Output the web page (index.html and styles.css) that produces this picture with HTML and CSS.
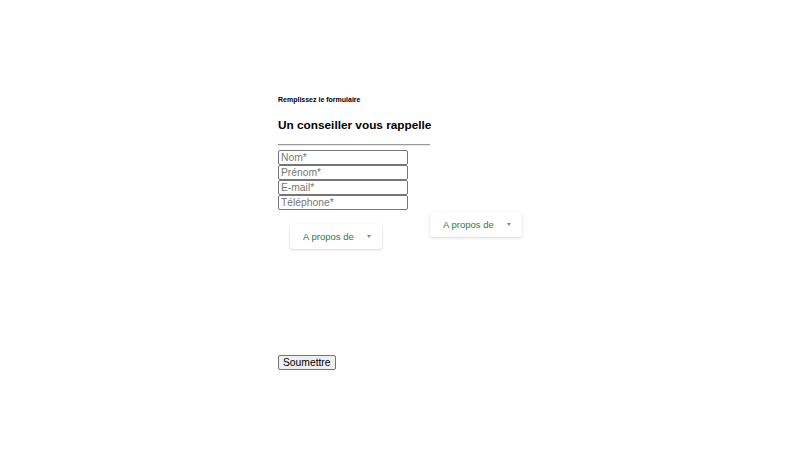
FILE: index.html
```html
<!DOCTYPE html>
<html lang="fr">
<head>
  <meta charset="UTF-8">
  <meta name="viewport" content="width=device-width, initial-scale=1.0">
  <title>Un conseiller vous rappelle</title>
  <link rel="stylesheet" href="styles.css">
</head>
<body>
  <div class="form-wrap">
    <div class="form-head">
      <div class="kicker">Remplissez le formulaire</div>
      <h2 class="title">Un conseiller vous rappelle</h2>
      <hr class="rule">
    </div>
    <form class="callback-form" onsubmit="return false">
      <div class="fields">
        <input class="field" type="text" placeholder="Nom*">
        <input class="field" type="text" placeholder="Prénom*">
        <input class="field" type="email" placeholder="E-mail*">
        <input class="field" type="tel" placeholder="Téléphone*">
      </div>
      <div class="selects">
        <!-- menu déroulant 1 -->
        <div class="dropdown dropdown-low">
          <span class="dropdown-label">A propos de</span>
          <span class="caret"></span>
        </div>
        <!-- menu déroulant 2 -->
        <div class="dropdown dropdown-high">
          <span class="dropdown-label">A propos de</span>
          <span class="caret"></span>
        </div>
      </div>
      <button class="submit" type="submit">Soumettre</button>
    </form>
  </div>
</body>
</html>
```

FILE: styles.css
```css
body {
  margin: 0;
  background: #fff;
  color: #000;
  font-family: "Liberation Sans", Arial, sans-serif;
}
.form-wrap {
  padding: 95px 0 0 278px;
}
.form-head {
  width: 152px;
}
.kicker {
  font-size: 7px;
  font-weight: bold;
  line-height: 9px;
  white-space: nowrap;
}
.title {
  margin: 14px 0 0;
  font-size: 11.8px;
  line-height: 14px;
  white-space: nowrap;
}
.rule {
  margin: 12px 0 4px;
  border: none;
  border-top: 1px solid #9a9a9a;
  border-bottom: 1px solid #e6e6e6;
}
.fields {
  display: flex;
  flex-direction: column;
  width: 130px;
}
.field {
  box-sizing: border-box;
  width: 130px;
  height: 15px;
  margin: 0;
  padding: 0 2px;
  border: 1px solid #767676;
  border-radius: 2px;
  font-family: "Liberation Sans", Arial, sans-serif;
  font-size: 10.3px;
  color: #000;
}
.field::placeholder {
  color: #777;
}
.selects {
  display: flex;
  align-items: flex-start;
  height: 145px;
}
.dropdown {
  box-sizing: border-box;
  width: 92px;
  height: 25px;
  display: flex;
  align-items: center;
  padding: 0 0 0 13px;
  background: #fff;
  box-shadow: 0 1px 3px rgba(0, 0, 0, 0.16);
  border-radius: 2px;
}
.dropdown-low {
  margin: 14px 0 0 12px;
}
.dropdown-high {
  margin: 2px 0 0 48px;
}
.dropdown-label {
  font-size: 9.5px;
  color: #2e7d32;
}
.caret {
  width: 0;
  height: 0;
  margin-left: 13px;
  border-left: 2.5px solid transparent;
  border-right: 2.5px solid transparent;
  border-top: 3px solid #888;
}
.submit {
  display: block;
  font-family: "Liberation Sans", Arial, sans-serif;
  font-size: 10.3px;
  height: 15px;
  padding: 0 4px;
  line-height: 11px;
  border: 1px solid #767676;
  border-radius: 2px;
  background: #efefef;
  color: #000;
}
```
